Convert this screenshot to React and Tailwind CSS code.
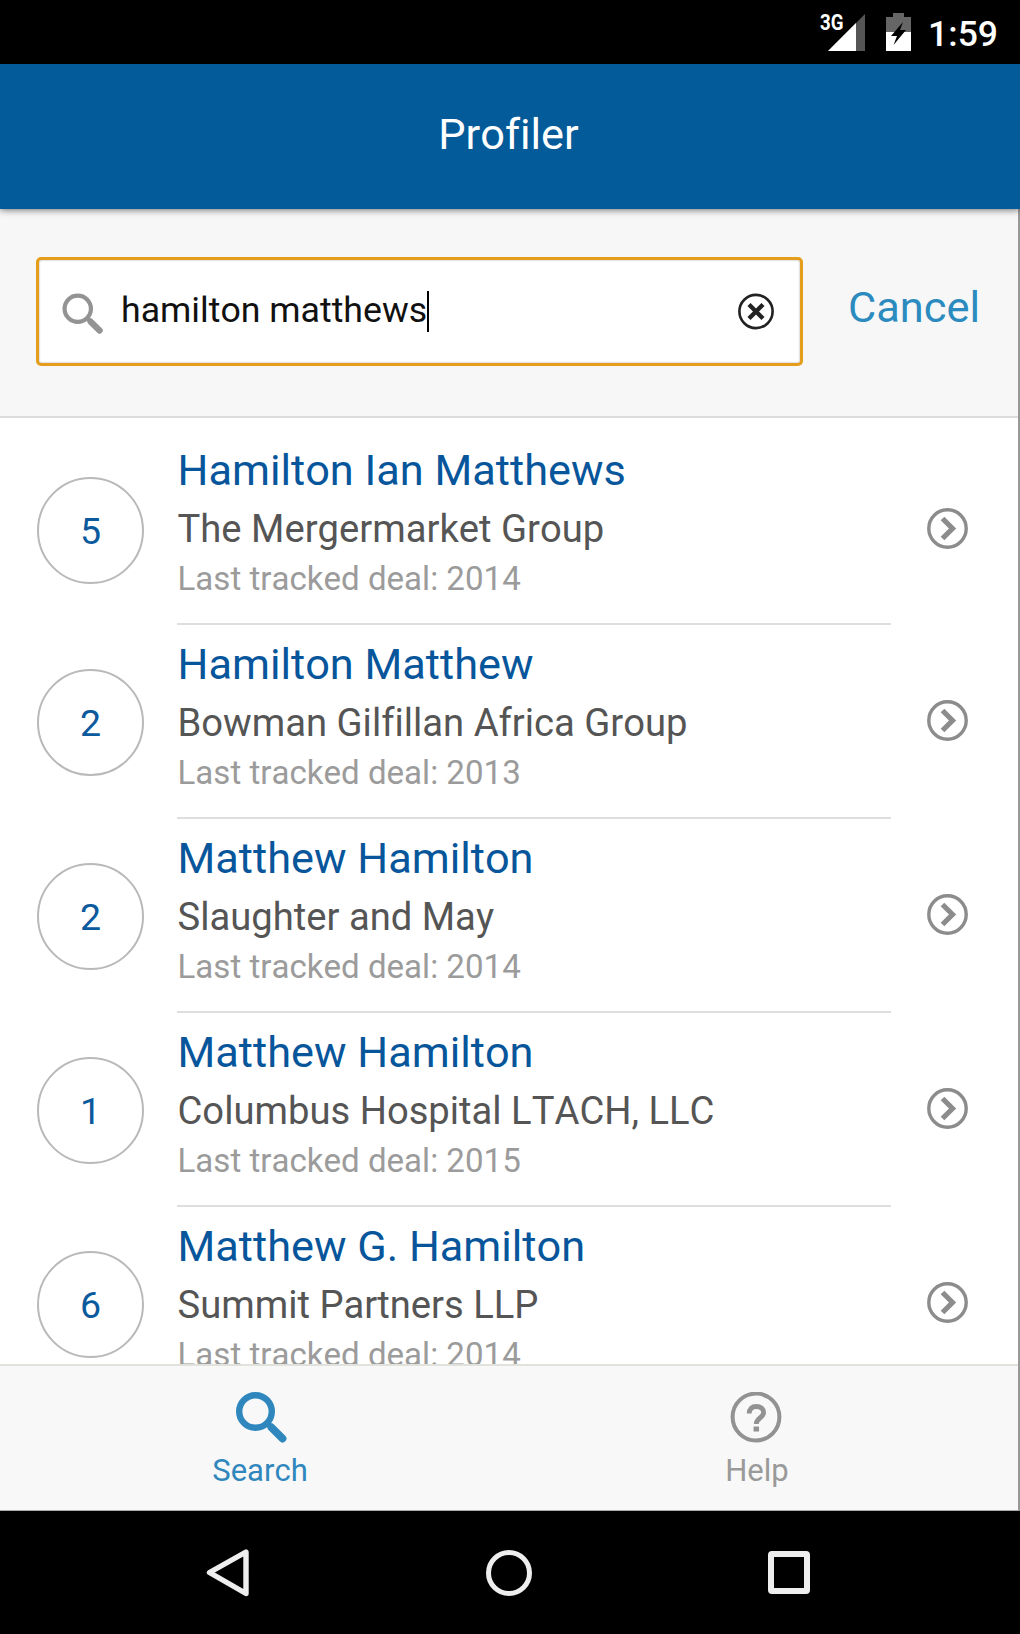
const results = [
  { count: 5, name: 'Hamilton Ian Matthews', company: 'The Mergermarket Group', year: 2014 },
  { count: 2, name: 'Hamilton Matthew', company: 'Bowman Gilfillan Africa Group', year: 2013 },
  { count: 2, name: 'Matthew Hamilton', company: 'Slaughter and May', year: 2014 },
  { count: 1, name: 'Matthew Hamilton', company: 'Columbus Hospital LTACH, LLC', year: 2015 },
  { count: 6, name: 'Matthew G. Hamilton', company: 'Summit Partners LLP', year: 2014 },
]

function MagnifierIcon({ className, ring }) {
  return (
    <svg className={className} viewBox="0 0 52 52" fill="none" stroke="currentColor">
      <circle cx="19.5" cy="19.5" r="16.3" strokeWidth={ring} />
      <path d="M31 31L35 35" strokeWidth="5.5" />
      <path d="M35.5 35.5L46.5 46.5" strokeWidth="7.8" strokeLinecap="round" />
    </svg>
  )
}

function StatusBar() {
  return (
    <div className="flex h-16 shrink-0 items-start justify-end bg-black pr-[22px] text-white">
      <div className="relative mt-[14px] mr-[21px] h-[37px] w-[45px]">
        <svg className="ml-2 h-[37px] w-[37px]" viewBox="0 0 37 37">
          <path d="M0 37L37 0V37Z" fill="#555" />
          <path d="M0 37L28 9V37Z" fill="#fff" />
        </svg>
        <span className="absolute top-0 left-0 origin-left scale-x-[0.87] text-[21.5px] leading-[18px] font-bold">
          3G
        </span>
      </div>
      <svg className="mt-[13px] mr-[17px] h-[38px] w-[25px]" viewBox="0 0 25 38">
        <path d="M0 4H7V0H18V4H25V20H0Z" fill="#666" />
        <path d="M0 19H25V38H0Z" fill="#fff" />
        <path d="M17 9L5 23H11L7.5 32L20 17H14Z" fill="#000" />
      </svg>
      <span className="mt-[12px] text-[35.5px] leading-[44px] font-medium">1:59</span>
    </div>
  )
}

function SearchBar() {
  return (
    <div className="flex h-[209px] shrink-0 items-start border-b-2 border-[#dcdcdc] bg-[#f7f7f8] pt-12 pl-9">
      <div className="flex h-[109px] w-[767px] items-center rounded-[5px] border-[3px] border-[#e59e1c] bg-white pr-[25px] pl-[23px] shadow-[inset_0_0_2px_#999]">
        <MagnifierIcon className="mt-[5px] h-[42px] w-[42px] text-[#939393]" ring="5.2" />
        <span className="mb-[4px] ml-[17px] text-[35.7px] leading-[44px] text-[#111]">
          hamilton matthews
        </span>
        <span className="h-[41px] w-[2px] bg-black" />
        <svg
          className="ml-auto h-[38px] w-[38px]"
          viewBox="0 0 38 38"
          fill="none"
          stroke="#222"
        >
          <circle cx="19" cy="18.5" r="16.6" strokeWidth="2.6" />
          <path d="M12 11.5L26 25.5M26 11.5L12 25.5" strokeWidth="4.4" />
        </svg>
      </div>
      <button className="mt-[26px] ml-[45px] text-[43.4px] leading-[50px] text-[#2b8bbf]">
        Cancel
      </button>
    </div>
  )
}

function ResultRow({ result, first }) {
  return (
    <div className="flex h-[194px] shrink-0 items-start pl-[37px]">
      <div
        className={`flex h-[107px] w-[107px] items-center justify-center rounded-full border-2 border-[#b9b9b9] pt-px text-[37.5px] text-[#0b5a9d] ${
          first ? 'mt-[46px]' : 'mt-[44px]'
        }`}
      >
        {result.count}
      </div>
      <div className="ml-[33px] h-[194px] w-[714px] border-b-2 border-[#dedede] pt-3 whitespace-nowrap">
        <div className="pl-[0.5px] text-[43.3px] leading-[56px] text-[#07569b]">{result.name}</div>
        <div className="pl-[0.5px] text-[38.2px] leading-[60px] text-[#555]">{result.company}</div>
        <div className="pl-[0.5px] text-[33.1px] leading-[39px] text-[#9b9b9b]">
          Last tracked deal: {result.year}
        </div>
      </div>
      <svg
        className={`ml-[36px] h-[41px] w-[41px] ${first ? 'mt-[77px]' : 'mt-[75px]'}`}
        viewBox="0 0 41 41"
        fill="none"
        stroke="#8c8c8c"
      >
        <circle cx="20.5" cy="20.5" r="18.7" strokeWidth="3.4" />
        <path d="M15.5 10.5L25.5 20.5L15.5 30.5" strokeWidth="5.2" />
      </svg>
    </div>
  )
}

function TabBar() {
  return (
    <div className="grid h-[147px] shrink-0 grid-cols-2 border-t-2 border-b border-t-[#e2e2dd] border-b-[#aaa] bg-[#f8f8f8] px-3 pt-[25px] text-[31px] leading-[38px]">
      <div className="flex flex-col items-center text-[#2f87bd]">
        <MagnifierIcon className="mt-px ml-[2px] h-[52px] w-[52px]" ring="6.4" />
        <span className="mt-[8px] mr-px">Search</span>
      </div>
      <div className="flex flex-col items-center text-[#9a9a9a]">
        <svg
          className="mt-px mr-[4px] h-[52px] w-[52px]"
          viewBox="0 0 52 52"
          fill="none"
          stroke="#929292"
        >
          <circle cx="26" cy="25" r="23.4" strokeWidth="4" />
          <path
            d="M19.2 21.5C19.2 16.8 22 14.5 26.3 14.5C30.8 14.5 33.6 17 33.6 20.5C33.6 25.8 26.3 25.8 26.3 32"
            strokeWidth="4.8"
          />
          <path d="M26.3 34.5V39.5" strokeWidth="5.5" />
        </svg>
        <span className="mt-[8px] mr-px">Help</span>
      </div>
    </div>
  )
}

function AndroidNav() {
  return (
    <div className="flex h-[123px] shrink-0 items-start bg-black pt-[37px] pl-[206px]">
      <svg className="h-[50px] w-[44px]" viewBox="0 0 44 50" fill="none" stroke="#eee">
        <path d="M3.5 24.5L40 4V45.5Z" strokeWidth="5.4" strokeLinejoin="round" />
      </svg>
      <div className="mt-[2px] ml-[236px] h-[46px] w-[46px] rounded-full border-[5.5px] border-[#eee]" />
      <div className="mt-[3px] ml-[236px] h-[43px] w-[42px] rounded-[4px] border-6 border-[#eee]" />
    </div>
  )
}

export default function App() {
  return (
    <div className="flex h-[1634px] w-[1020px] flex-col overflow-hidden bg-white font-['Roboto',sans-serif] [font-kerning:none] [font-variant-ligatures:none]">
      <StatusBar />
      <header className="z-10 flex h-[145px] shrink-0 items-center justify-center bg-[#035b9a] pr-[3px] pb-[3px] text-[43.3px] leading-[52px] text-white shadow-[0_1px_7px_rgba(0,0,0,0.55)]">
        Profiler
      </header>
      <main className="flex h-[1302px] shrink-0 flex-col border-r-2 border-[#999]">
        <SearchBar />
        <div className="flex min-h-0 flex-1 flex-col overflow-hidden pt-[13px]">
          {results.map((result, index) => (
            <ResultRow key={index} result={result} first={index === 0} />
          ))}
        </div>
        <TabBar />
      </main>
      <AndroidNav />
    </div>
  )
}
